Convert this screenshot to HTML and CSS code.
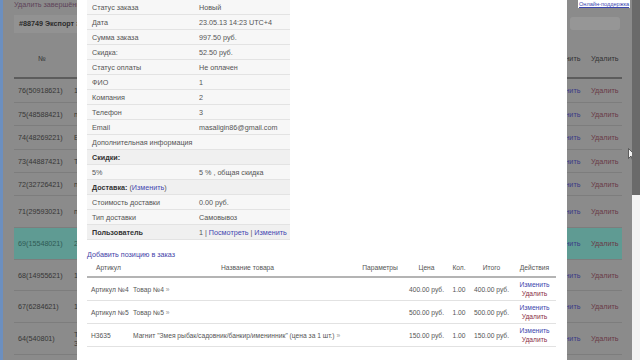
FILE: index.html
```html
<!DOCTYPE html>
<html lang="ru">
<head>
    <meta charset="UTF-8">
    <title>Заказ #88749</title>
    <link rel="stylesheet" href="styles.css">
</head>
<body>

<div class="screen">
    <div class="page">
        <div class="topbar">
            <a class="link-del">Удалить завершённые</a>
        </div>
        <div class="export-row">
            <div class="export">#88749 Экспорт заказов</div>
            <div class="filter"></div>
        </div>

        <table class="orders">
            <thead>
                <tr>
                    <th class="c-num">№</th>
                    <th class="c-mid"></th>
                    <th class="c-edit">Изменить</th>
                    <th class="c-del">Удалить</th>
                </tr>
            </thead>
            <tbody>
                <tr class="h24"><td>76(50918621)</td><td>1</td><td><a class="edit">Изменить</a></td><td><a class="del">Удалить</a></td></tr>
                <tr class="h23"><td>75(48588421)</td><td>п</td><td><a class="edit">Изменить</a></td><td><a class="del">Удалить</a></td></tr>
                <tr class="h24"><td>74(48269221)</td><td>Б</td><td><a class="edit">Изменить</a></td><td><a class="del">Удалить</a></td></tr>
                <tr class="h23"><td>73(44887421)</td><td>Т</td><td><a class="edit">Изменить</a></td><td><a class="del">Удалить</a></td></tr>
                <tr class="h23"><td>72(32726421)</td><td>п</td><td><a class="edit">Изменить</a></td><td><a class="del">Удалить</a></td></tr>
                <tr class="h32"><td>71(29593021)</td><td>п</td><td><a class="edit">Изменить</a></td><td><a class="del">Удалить</a></td></tr>
                <tr class="h32 active"><td>69(15548021)</td><td>2</td><td><a class="edit">Изменить</a></td><td><a class="del">Удалить</a></td></tr>
                <tr class="h31"><td>68(14955621)</td><td>1</td><td><a class="edit">Изменить</a></td><td><a class="del">Удалить</a></td></tr>
                <tr class="h32"><td>67(6284621)</td><td>1</td><td><a class="edit">Изменить</a></td><td><a class="del">Удалить</a></td></tr>
                <tr class="h32"><td>64(540801)</td><td>Т<br>32</td><td><a class="edit">Изменить</a></td><td><a class="del">Удалить</a></td></tr>
            </tbody>
        </table>
    </div>

    <a class="support">Онлайн-поддержка</a>

    <div class="modal">
        <table class="info">
            <tr><td class="lbl">Статус заказа</td><td>Новый</td></tr>
            <tr><td class="lbl">Дата</td><td>23.05.13 14:23 UTC+4</td></tr>
            <tr><td class="lbl">Сумма заказа</td><td>997.50 руб.</td></tr>
            <tr><td class="lbl">Скидка:</td><td>52.50 руб.</td></tr>
            <tr><td class="lbl">Статус оплаты</td><td>Не оплачен</td></tr>
            <tr><td class="lbl">ФИО</td><td>1</td></tr>
            <tr><td class="lbl">Компания</td><td>2</td></tr>
            <tr><td class="lbl">Телефон</td><td>3</td></tr>
            <tr><td class="lbl">Email</td><td>masaligin86@gmail.com</td></tr>
            <tr><td class="lbl">Дополнительная информация</td><td></td></tr>
            <tr class="sect"><td colspan="2"><b>Скидки:</b></td></tr>
            <tr><td class="lbl">5%</td><td>5 % , общая скидка</td></tr>
            <tr class="sect"><td colspan="2"><b>Доставка:</b> (<a>Изменить</a>)</td></tr>
            <tr><td class="lbl">Стоимость доставки</td><td>0.00 руб.</td></tr>
            <tr><td class="lbl">Тип доставки</td><td>Самовывоз</td></tr>
            <tr class="sect"><td class="lbl"><b>Пользователь</b></td><td>1 | <a>Посмотреть</a> | <a>Изменить</a></td></tr>
        </table>

        <a class="add-item">Добавить позицию в заказ</a>

        <table class="items">
            <thead>
                <tr>
                    <th class="w-art">Артикул</th>
                    <th class="w-name">Название товара</th>
                    <th class="w-par">Параметры</th>
                    <th class="w-price">Цена</th>
                    <th class="w-qty">Кол.</th>
                    <th class="w-sum">Итого</th>
                    <th class="w-act">Действия</th>
                </tr>
            </thead>
            <tbody>
                <tr>
                    <td class="art">Артикул №4</td>
                    <td class="name">Товар №4 <span class="more">»</span></td>
                    <td></td>
                    <td>400.00 руб.</td>
                    <td>1.00</td>
                    <td>400.00 руб.</td>
                    <td class="act"><a class="edit">Изменить</a><a class="del">Удалить</a></td>
                </tr>
                <tr>
                    <td class="art">Артикул №5</td>
                    <td class="name">Товар №5 <span class="more">»</span></td>
                    <td></td>
                    <td>500.00 руб.</td>
                    <td>1.00</td>
                    <td>500.00 руб.</td>
                    <td class="act"><a class="edit">Изменить</a><a class="del">Удалить</a></td>
                </tr>
                <tr>
                    <td class="art">H3635</td>
                    <td class="name">Магнит "Змея рыбак/садовник/банкир/именинник" (цена за 1 шт.) <span class="more">»</span></td>
                    <td></td>
                    <td>150.00 руб.</td>
                    <td>1.00</td>
                    <td>150.00 руб.</td>
                    <td class="act"><a class="edit">Изменить</a><a class="del">Удалить</a></td>
                </tr>
            </tbody>
        </table>
    </div>

    <svg class="cursor" width="8" height="13" viewBox="0 0 8 13">
        <path d="M0.5 0.5 L0.5 10.5 L3 8 L4.6 12 L6 11.4 L4.4 7.6 L7.5 7.6 Z" fill="#f2f2f2" stroke="#444" stroke-width="0.8"/>
    </svg>
</div>

<div class="scrollbar"><div class="thumb"></div></div>

</body>
</html>
```

FILE: styles.css
```css
body {
    margin: 0;
    display: flex;
    height: 360px;
    overflow: hidden;
    font-family: "Liberation Sans", Arial, sans-serif;
    font-size: 7.2px;
    color: #555;
}
a {
    cursor: pointer;
}
.screen {
    flex: 1;
    position: relative;
    overflow: hidden;
    background-color: #8b8b8b;
    border-left: 3px solid #6c8fbf;
}
.page {
    padding: 0 10px 0 11px;
}
.topbar {
    height: 12px;
    width: 63px;
    overflow: hidden;
    white-space: nowrap;
}
.link-del {
    color: #5e4459;
    line-height: 10px;
}
.support {
    position: absolute;
    top: 0;
    right: 2px;
    width: 52px;
    height: 8px;
    line-height: 8px;
    background-color: #fff;
    color: #3b47b0;
    text-decoration: underline;
    font-size: 5.6px;
    padding-left: 1px;
    white-space: nowrap;
    overflow: hidden;
    box-sizing: border-box;
}
.export-row {
    display: flex;
    margin-top: 3px;
    height: 18px;
}
.export {
    background-color: #929292;
    color: #2b2b2b;
    font-weight: bold;
    line-height: 18px;
    padding: 0 0 0 5px;
    width: 58px;
    white-space: nowrap;
    overflow: hidden;
}
.filter {
    margin: 2px 2px 0 auto;
    width: 50px;
    height: 13px;
    border-radius: 3px;
    background-color: #969696;
}
.orders {
    width: 608px;
    margin-top: 3px;
    border-collapse: separate;
    border-spacing: 0;
    table-layout: fixed;
}
.orders th {
    height: 38px;
    padding: 3px 0 0;
    font-weight: normal;
    color: #333;
    border-bottom: 2px solid #5c5c5c;
}
.orders th.c-num { width: 56px; }
.orders th.c-edit { width: 36px; text-align: left; padding-left: 8px; }
.orders th.c-del { width: 31px; text-align: left; padding-left: 7px; }
.orders td {
    padding: 0 4px;
    color: #363636;
    border-bottom: 1px solid #7d7d7d;
    white-space: nowrap;
    overflow: hidden;
}
.orders td:nth-child(3) {
    padding-left: 8px;
}
.orders td:last-child {
    padding-left: 7px;
}
.orders tr.h23 td { height: 22px; }
.orders tr.h24 td { height: 23px; }
.orders tr.h31 td { height: 30px; }
.orders tr.h32 td { height: 31px; }
.orders tr.active td {
    background-color: #5f9b93;
    color: #2e5a54;
}
.orders .edit {
    color: #3b3b86;
}
.orders .del {
    color: #6a3a46;
}

.modal {
    position: absolute;
    left: 74px;
    top: 0;
    width: 490px;
    height: 360px;
    padding: 0 11px 0 10px;
    box-sizing: border-box;
    background-color: #fff;
}
.info {
    width: 203px;
    border-collapse: separate;
    border-spacing: 0;
    table-layout: fixed;
}
.info td {
    height: 14px;
    padding: 0 0 0 4px;
    background-color: #f7f7f7;
    border-bottom: 1px solid #e3e3e3;
    white-space: nowrap;
    color: #555;
}
.info td.lbl {
    width: 103px;
    padding-left: 5px;
}
.info tr.sect td {
    background-color: #f0f0f0;
    padding-left: 5px;
}
.info tr.sect td + td {
    padding-left: 4px;
}
.info b {
    color: #333;
}
.info a {
    color: #4348b0;
}
.add-item {
    display: block;
    margin-top: 10px;
    line-height: 9px;
    color: #3f43a8;
}
.items {
    width: 469px;
    border-collapse: separate;
    border-spacing: 0;
    table-layout: fixed;
    font-size: 6.7px;
}
.items th {
    height: 17px;
    padding: 0;
    font-weight: normal;
    color: #555;
    border-bottom: 2px solid #b4b4b4;
    white-space: nowrap;
}
.items .w-art { width: 43px; }
.items .w-name { width: 215px; padding-left: 10px; }
.items .w-par { width: 50px; }
.items .w-price { width: 43px; }
.items .w-qty { width: 22px; }
.items .w-sum { width: 43px; }
.items .w-act { width: 43px; }
.items td {
    height: 22px;
    padding: 0;
    text-align: center;
    white-space: nowrap;
    color: #555;
    border-bottom: 1px solid #e2e2e2;
}
.items td.art {
    text-align: left;
    padding-left: 4px;
}
.items td.name {
    text-align: left;
    padding-left: 3px;
}
.items .more {
    color: #999;
}
.items .act a {
    display: block;
    line-height: 9px;
}
.items .edit {
    color: #4146ad;
}
.items .del {
    color: #8a2f45;
}

.cursor {
    position: absolute;
    left: 625px;
    top: 148px;
}
.scrollbar {
    width: 8px;
    background-color: #f3f3f3;
}
.thumb {
    height: 195px;
    background-color: #6a6a6a;
}
```
